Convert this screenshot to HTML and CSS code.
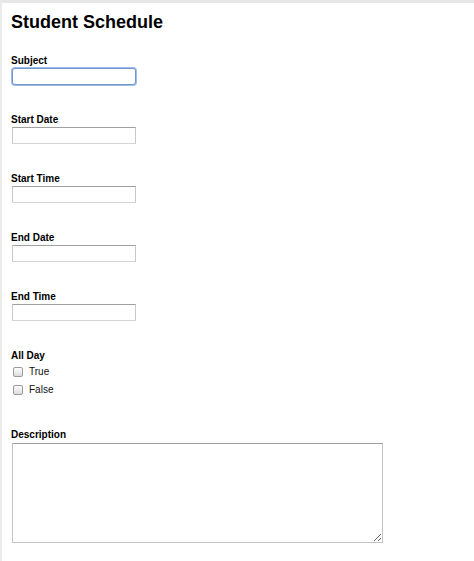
FILE: index.html
```html
<!DOCTYPE html>
<html>
<head>
<meta charset="utf-8">
<title>Student Schedule</title>
<link rel="stylesheet" href="styles.css">
</head>
<body>
<div class="page">
  <h1 class="title">Student Schedule</h1>
  <form class="form">
    <div class="field">
      <label class="label" for="subject">Subject</label>
      <input class="text-input focused" id="subject" type="text">
    </div>
    <div class="field">
      <label class="label" for="sdate">Start Date</label>
      <input class="text-input" id="sdate" type="text">
    </div>
    <div class="field">
      <label class="label" for="stime">Start Time</label>
      <input class="text-input" id="stime" type="text">
    </div>
    <div class="field">
      <label class="label" for="edate">End Date</label>
      <input class="text-input" id="edate" type="text">
    </div>
    <div class="field">
      <label class="label" for="etime">End Time</label>
      <input class="text-input" id="etime" type="text">
    </div>
    <div class="field field-check">
      <div class="label">All Day</div>
      <label class="check-row"><input class="check" type="checkbox"><span>True</span></label>
      <label class="check-row"><input class="check" type="checkbox"><span>False</span></label>
    </div>
    <div class="field field-desc">
      <label class="label" for="desc">Description</label>
      <textarea class="textarea" id="desc"></textarea>
    </div>
  </form>
</div>
</body>
</html>
```
FILE: styles.css
```css
html, body {
  margin: 0;
  padding: 0;
  background: #ffffff;
}
body {
  font-family: "Liberation Sans", Arial, sans-serif;
  color: #111;
}
.page {
  min-height: 558px;
  border-top: 3px solid #e7e7e9;
  border-left: 2px solid #ebebeb;
  padding: 8px 0 0 9px;
  box-sizing: border-box;
}
.title {
  margin: 0;
  font-size: 18px;
  line-height: 22px;
  font-weight: bold;
  color: #000;
}
.form {
  margin: 22px 0 0 0;
  display: flex;
  flex-direction: column;
}
.field {
  display: flex;
  flex-direction: column;
  align-items: flex-start;
  margin-bottom: 29px;
}
.label {
  font-size: 10px;
  line-height: 12px;
  font-weight: bold;
  color: #000;
  margin-bottom: 1px;
}
.text-input {
  box-sizing: border-box;
  width: 124px;
  height: 17px;
  margin: 0 0 0 1px;
  padding: 0 2px;
  border: 1px solid;
  border-color: #a0a0a0 #c9c9c9 #d4d4d4 #c9c9c9;
  background: #fff;
  outline: none;
  font-size: 10px;
  font-family: "Liberation Sans", Arial, sans-serif;
}
.text-input.focused {
  border: 1px solid #6f97d2;
  border-radius: 3px;
  box-shadow: 0 0 0 1px rgba(120, 160, 220, 0.7);
}
.field-check {
  margin-bottom: 0;
}
.check-row {
  display: flex;
  align-items: center;
  height: 18px;
  font-size: 10px;
  line-height: 18px;
  color: #111;
}
.check {
  -webkit-appearance: none;
  appearance: none;
  box-sizing: border-box;
  width: 10px;
  height: 10px;
  margin: 0 6px 0 2px;
  border: 1px solid #9a9a9a;
  border-radius: 2px;
  background: linear-gradient(#fdfdfd, #dcdcdc);
}
.field-desc {
  margin-top: 30px;
}
.field-desc .label {
  margin-bottom: 2px;
}
.textarea {
  box-sizing: border-box;
  width: 371px;
  height: 100px;
  margin: 0 0 0 1px;
  padding: 2px;
  border: 1px solid;
  border-color: #a0a0a0 #c4c4c4 #c4c4c4 #c4c4c4;
  background: #fff;
  outline: none;
  font-family: "Liberation Sans", Arial, sans-serif;
  font-size: 10px;
}
```
